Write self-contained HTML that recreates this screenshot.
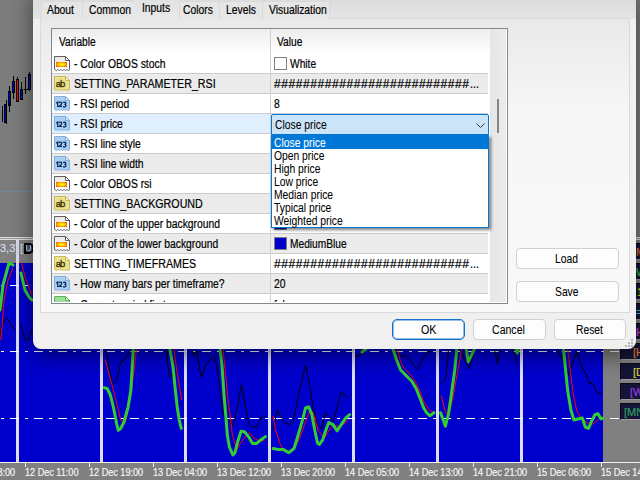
<!DOCTYPE html>
<html><head><meta charset="utf-8">
<style>
*{box-sizing:border-box}
html,body{margin:0;padding:0}
body{width:640px;height:480px;overflow:hidden;position:relative;background:#808080;font-family:"Liberation Sans",sans-serif}
.abs{position:absolute}
.t{position:absolute;line-height:20px;white-space:nowrap;-webkit-text-stroke:0.2px currentColor}
#topchart{position:absolute;left:0;top:0;width:640px;height:237px;background:#7c7c7c}
#sep{position:absolute;left:0;top:237px;width:640px;height:3px;border-top:1px solid #dedede;border-bottom:1px solid #dedede;background:#9a9a9a}
#sub{position:absolute;left:0;top:240px;width:640px;height:222px;background:#808080}
#blue{position:absolute;left:0;top:263px;width:603px;height:199px;background:#0000cd}
.vsep{position:absolute;top:240px;width:3px;height:222px;background:#dcdcf2}
#axis{position:absolute;left:0;top:462px;width:640px;height:18px;background:#808080;border-top:1px solid #f0f0f0}
.tick{position:absolute;top:463px;width:1px;height:4px;background:#f0f0f0}
.rbox{position:absolute;left:620px;width:22px;height:17px;background:#131436;border:1px solid #0a0a18;border-bottom-color:#9a9a9a}
#dlg{position:absolute;left:33px;top:-10px;width:603px;height:359px;background:#f0f0f0;border-radius:0 0 8px 8px;box-shadow:0 6px 22px rgba(0,0,0,.5)}
#tabstrip{position:absolute;left:33px;top:0;width:603px;height:19px;background:linear-gradient(#dcdcdc,#e4e4e4)}
#panel{position:absolute;left:40px;top:18px;width:590px;height:295px;border:1px solid #d9d9d9;background:linear-gradient(#e9e9e9,#f6f6f6 90px,#f9f9f9)}
.tab{position:absolute;top:1px;height:18px;border:1px solid #d9d9d9;border-bottom:none;background:#e6e6e6}
.tab.sel{top:-1px;height:20px;background:linear-gradient(#e2e2e2,#e9e9e9);border-color:transparent}
#list{position:absolute;left:51px;top:28px;width:457px;height:276px;border:1px solid #828790;background:#fff}
#listclip{position:absolute;left:52px;top:29px;width:455px;height:273px;overflow:hidden}
#listin{position:absolute;left:-52px;top:-29px;width:640px;height:480px}
#hdr{position:absolute;left:52px;top:29px;width:438px;height:24px;background:linear-gradient(#ededed,#ffffff)}
.row{position:absolute;left:52px;width:436px;height:20px}
.hl{position:absolute;left:52px;width:436px;height:1px;background:#cbcbcb}
.ic{position:absolute;width:16px;height:16px}
.ic svg{display:block}
.sw{position:absolute;width:13px;height:13px;border:1px solid #808080}
#coldiv{position:absolute;left:270px;top:29px;width:1px;height:275px;background:#d0d0d0}
#sbar{position:absolute;left:490px;top:29px;width:16px;height:273px;background:linear-gradient(90deg,#e6e6e6,#ebebeb)}
#thumb{position:absolute;left:497px;top:99px;width:2px;height:34px;background:#858585}
#combo{position:absolute;left:271px;top:114px;width:218px;height:21px;border-radius:2px 2px 0 0;background:#cce4f7;border:1px solid #0078d4}
#drop{position:absolute;left:271px;top:135px;width:218px;height:93px;background:#fff;border:1px solid #0078d4;border-top:none;box-shadow:2px 2px 3px rgba(0,0,0,.5)}
.btn{position:absolute;height:21px;border:1px solid #d0d0d0;border-radius:4px;background:#fdfdfd}
</style></head><body>
<div id="topchart">
<svg class="abs" style="left:0;top:0" width="40" height="237">

<g stroke="#000" stroke-width="1">
<line x1="2.5" y1="106" x2="2.5" y2="122"/>
<line x1="6.5" y1="100" x2="6.5" y2="124"/>
<line x1="9.5" y1="86" x2="9.5" y2="112"/>
<line x1="13.5" y1="76" x2="13.5" y2="99"/>
<line x1="17.5" y1="77" x2="17.5" y2="102"/>
<line x1="21.5" y1="82" x2="21.5" y2="99"/>
<line x1="25.5" y1="77" x2="25.5" y2="94"/>
<line x1="29.5" y1="72" x2="29.5" y2="91"/>
<line x1="24" y1="89.5" x2="28" y2="89.5"/>
</g>
<g stroke="#000" stroke-width="1">
<rect x="4.5" y="104.5" width="2" height="18" fill="#0000cd"/>
<rect x="8.5" y="91.5" width="2" height="14" fill="#0000cd"/>
<rect x="12.5" y="81.5" width="2" height="11" fill="#0000cd"/>
<rect x="16.5" y="79.5" width="2" height="22" fill="#ff0000"/>
<rect x="20.5" y="89.5" width="2" height="10" fill="#0000cd"/>
<rect x="28.5" y="74.5" width="2" height="15" fill="#0000cd"/>
</g>
</svg>
</div>
<div class="abs" style="left:0;top:191px;width:640px;height:1px;background:#7088a0"></div>
<div id="sep"></div>
<div id="sub"></div>
<div id="blue"></div>
<div class="vsep" style="left:16px"></div>
<div class="vsep" style="left:100px"></div>
<div class="vsep" style="left:184px"></div>
<div class="vsep" style="left:268px"></div>
<div class="vsep" style="left:352px"></div>
<div class="vsep" style="left:436px"></div>
<div class="vsep" style="left:520px"></div>
<svg class="abs" style="left:0;top:0" width="640" height="480">
<g stroke="#ffffff" stroke-width="1" stroke-dasharray="9 6 3 6" fill="none">
<line x1="-14" y1="285.5" x2="640" y2="285.5"/>
<line x1="-14" y1="351.5" x2="640" y2="351.5"/>
<line x1="-14" y1="418.5" x2="640" y2="418.5"/>
</g>
<g fill="none" stroke-linejoin="round" stroke-linecap="round">
<g stroke="#000" stroke-width="1">
<polyline points="0,335 3,322 7,318 10,323 14,330"/>
<polyline points="21,325 25,340 28,340 32,330"/>
<polyline points="106,349 109.4,368 112.5,385.6 115.6,382.5 118.75,372 120.8,361.7 124,360.6 126,357.5 129.2,353 131.25,349"/>
<polyline points="166.7,349 167.7,363.75 169.8,377.3 172.5,373 175,393 177,404.4 180.2,403.3"/>
<polyline points="192.3,350 193.75,355.4 196.25,350.8"/>
<polyline points="197,352.3 201.25,377.3 206.5,363.75 213.75,355.4 216.9,365.8 220,390.8 223.1,413.75 225.4,419 229.4,420 232.9,425.7 237.6,406.8 241.25,384.6 247.1,414.9 249.1,425 253.2,427.1 257.3,426.4 260.65,419 263.4,415.6 265.4,417"/>
<polyline points="273.2,428.75 277.4,410 280.5,416.25 284.7,422.5 288.8,424.6 293,421.5 297.2,401.7 301.3,383 305.5,365.2 309.7,385 313.1,408 317.3,424.6 321.5,428.75 325.6,413 328.75,416.25 332.9,421.5 337,408 341.25,392.3 344.4,394.4 348.5,397.5"/>
<polyline points="356,356 361,355 364,350"/>
<polyline points="393.3,349 401.7,356.5 405.8,355.4 411,361.7 417.3,369 420.4,362.7 425.6,354.4 429.8,350.8 433,349"/>
<polyline points="441.2,383.5 445.4,379.4 447.5,361.7 448.5,349"/>
<polyline points="461,351.25 465.2,361.7 469.3,369 472.5,356.5 474.5,349"/>
<polyline points="494.3,349.2 495.9,355.4 497.5,363.75 498.5,355.4 499.5,349.2"/>
<polyline points="511.5,349.2 514.1,353.3 515.7,358.5 517.25,363.75"/>
<polyline points="557.3,349 562.5,359.6 568.75,375.2 573,361.7 577,352.3 581.25,365.8 584.4,371 587.5,378.3 589.6,383.5 592.7,383.5 595.8,389.8 598,394 601,393"/>
</g>
<g stroke="#ff0000" stroke-width="1">
<polyline points="1,340 4,300 8,280 13,268"/>
<polyline points="21,262 26,280 32,295"/>
<polyline points="105.2,359.6 112.5,386.7 120.8,420 122.9,423 125.4,422 129.2,403 133.3,376 136.5,349"/>
<polyline points="174,349 177,372 180.2,390.8 181.7,399.6"/>
<polyline points="223,349 225.2,370 228.3,403.3 230.2,414.9 232.2,433.9 234.9,443.4 236.9,449.5 240.3,443.4 244.4,438 249.1,432.5 253.9,438 258.6,440.65 264,440.65"/>
<polyline points="273.2,416.25 275.3,428.75 279.5,442.3 282.6,448.5 289.9,451.7 295,447.5 299.25,439.2 304.5,424.6 309.7,411 312.8,412 318.3,430.8 324.6,438 328.75,430.8 333,424.6 339.2,426.7 344.4,423.5 348.5,419.4"/>
<polyline points="397.5,349 400.6,361.7 403.75,368 409,373 415.2,381.5 419.4,389.8 423.5,401.25 428.75,409.6 434,412.7"/>
<polyline points="441.2,396 445.4,411.7 448.5,415.8 452.7,399 456.8,376.25 461,353.3 462,349"/>
<polyline points="567.7,349 569.8,365.8 573,393 577,411.7 581.25,418 587.5,423 592.7,424.2 596.9,421 601,416.9"/>
</g>
<g stroke="#33cc33" stroke-width="3">
<polyline points="0,310 3,285 9,263 13,265"/>
<polyline points="21,273 25,290 29,297 32,300"/>
<polyline points="104.2,387.7 107.3,388.75 110.4,395 113.5,407.5 116.7,424 118.3,430.4 120.8,428.3 124,422 128,407.5 130.8,390.8 132.3,365.8 133.3,349"/>
<polyline points="169.8,349 172.9,365.8 175,386.7 177,405.4 179.2,420 181.25,428.3"/>
<polyline points="220,349 222,365.8 224.2,397 225.8,415.8 227.5,436.6 229.5,447.4 232.9,454.9 234.9,452.8 237.6,442 241,431.2 244.4,431.8 248.5,436.6 252.5,443.4 256.6,443.4 260.65,440 265.4,436.6"/>
<polyline points="273.2,448.5 278.4,449.6 283.6,449.6 288.8,452.7 294,448.5 298.2,435 302.4,420.4 305.5,408 308.6,406.9 311.75,414.2 314.9,430.8 317.6,443.3 319.4,444.4 322.5,440.2 325.6,430.8 328.75,422.5 333,424.6 337,430.8 341.25,424.6 345.4,418.3 349.6,414.6"/>
<polyline points="362,352 366,349"/>
<polyline points="392.9,349 396.5,359.6 400.6,370 405.8,375.2 412,381.5 416.25,388.75 420.4,399.2 423.5,407.5 426.7,412.7 429.8,415.8 434,412.7"/>
<polyline points="440.6,412.7 445.4,426.25 448.5,413.75 451.6,393 454.75,370 456.8,349"/>
<polyline points="466.2,349 468.3,361.7 471.4,355.4 474.5,349"/>
<polyline points="516,349 517.25,353 518.5,349"/>
<polyline points="563.5,349 565.6,370 567.7,390.8 570.8,409.6 574,420 578,419 582.3,418 585.4,427.3 588.5,428.3 591.7,421 594.8,414.8 598,413.75 601,419 603,418"/>
</g>
</g>
</svg>

<span class="t" style="left:0px;top:238px;font-size:11px;color:#d4dae6;">3,3)</span>
<span class="t" style="left:20px;top:238px;font-size:11px;color:#d4dae6;">[</span>
<span class="abs" style="left:24px;top:243px;width:10px;height:11px;background:#4a5568;border:2px solid #000;border-radius:0 5px 5px 0"></span><span class="abs" style="left:26px;top:245px;width:5px;height:6px;border:1px solid #a8c4e8;border-top:none;border-radius:0 0 3px 3px"></span>
<div id="axis"></div>
<div class="tick" style="left:25px"></div><span class="t" style="left:25px;top:463px;font-size:10px;color:#f4f4f4;transform:scaleX(0.91);transform-origin:0 0;">12 Dec 11:00</span>
<div class="tick" style="left:89px"></div><span class="t" style="left:89px;top:463px;font-size:10px;color:#f4f4f4;transform:scaleX(0.91);transform-origin:0 0;">12 Dec 19:00</span>
<div class="tick" style="left:153px"></div><span class="t" style="left:153px;top:463px;font-size:10px;color:#f4f4f4;transform:scaleX(0.91);transform-origin:0 0;">13 Dec 04:00</span>
<div class="tick" style="left:217px"></div><span class="t" style="left:217px;top:463px;font-size:10px;color:#f4f4f4;transform:scaleX(0.91);transform-origin:0 0;">13 Dec 12:00</span>
<div class="tick" style="left:281px"></div><span class="t" style="left:281px;top:463px;font-size:10px;color:#f4f4f4;transform:scaleX(0.91);transform-origin:0 0;">13 Dec 20:00</span>
<div class="tick" style="left:345px"></div><span class="t" style="left:345px;top:463px;font-size:10px;color:#f4f4f4;transform:scaleX(0.91);transform-origin:0 0;">14 Dec 05:00</span>
<div class="tick" style="left:409px"></div><span class="t" style="left:409px;top:463px;font-size:10px;color:#f4f4f4;transform:scaleX(0.91);transform-origin:0 0;">14 Dec 13:00</span>
<div class="tick" style="left:473px"></div><span class="t" style="left:473px;top:463px;font-size:10px;color:#f4f4f4;transform:scaleX(0.91);transform-origin:0 0;">14 Dec 21:00</span>
<div class="tick" style="left:537px"></div><span class="t" style="left:537px;top:463px;font-size:10px;color:#f4f4f4;transform:scaleX(0.91);transform-origin:0 0;">15 Dec 06:00</span>
<div class="tick" style="left:601px"></div><span class="t" style="left:601px;top:463px;font-size:10px;color:#f4f4f4;transform:scaleX(0.91);transform-origin:0 0;">15 Dec 14:00</span>
<span class="t" style="left:-39px;top:463px;font-size:10px;color:#f4f4f4;transform:scaleX(0.91);transform-origin:0 0;">12 Dec 03:00</span>
<div class="rbox" style="top:243px"></div><span class="t" style="left:636px;top:242px;font-size:11px;color:#e07030;">M</span>
<div class="rbox" style="top:263px"></div><span class="t" style="left:636px;top:262px;font-size:11px;color:#30c030;">W</span>
<div class="rbox" style="top:283px"></div><span class="t" style="left:637px;top:282px;font-size:11px;color:#e0e000;">1</span>
<div class="rbox" style="top:303px"></div><span class="t" style="left:636px;top:302px;font-size:11px;color:#30c0e0;">=</span>
<div class="rbox" style="top:323px"></div><span class="t" style="left:636px;top:322px;font-size:11px;color:#e040e0;">H</span>
<div class="rbox" style="top:343px"></div><span class="t" style="left:633px;top:342px;font-size:11px;color:#e08030;">[H</span>
<div class="rbox" style="top:363px"></div><span class="t" style="left:633px;top:362px;font-size:11px;color:#d0d040;">[D</span>
<div class="rbox" style="top:383px"></div><span class="t" style="left:630px;top:382px;font-size:11px;color:#9040e0;">[W</span>
<div class="rbox" style="top:403px"></div><span class="t" style="left:624px;top:402px;font-size:11px;color:#30a060;">[MN</span>

<div id="dlg"></div>
<div id="tabstrip"></div>
<div id="panel"></div>
<div class="tab" style="left:41px;width:42px"></div><span class="t" style="left:47px;top:0px;font-size:12px;color:#000;transform:scaleX(0.86);transform-origin:0 0;">About</span>
<div class="tab" style="left:82px;width:53px"></div><span class="t" style="left:89px;top:0px;font-size:12px;color:#000;transform:scaleX(0.86);transform-origin:0 0;">Common</span>
<div class="tab sel" style="left:134px;width:46px"></div><span class="t" style="left:142px;top:-2px;font-size:12px;color:#000;transform:scaleX(0.86);transform-origin:0 0;">Inputs</span>
<div class="tab" style="left:179px;width:41px"></div><span class="t" style="left:183px;top:0px;font-size:12px;color:#000;transform:scaleX(0.86);transform-origin:0 0;">Colors</span>
<div class="tab" style="left:219px;width:44px"></div><span class="t" style="left:226px;top:0px;font-size:12px;color:#000;transform:scaleX(0.86);transform-origin:0 0;">Levels</span>
<div class="tab" style="left:262px;width:68px"></div><span class="t" style="left:269px;top:0px;font-size:12px;color:#000;transform:scaleX(0.86);transform-origin:0 0;">Visualization</span>
<div id="list"></div>
<div id="listclip"><div id="listin">
<div id="hdr"></div>
<span class="t" style="left:59px;top:32px;font-size:12px;color:#000;transform:scaleX(0.85);transform-origin:0 0;">Variable</span><span class="t" style="left:277px;top:32px;font-size:12px;color:#000;transform:scaleX(0.85);transform-origin:0 0;">Value</span>
<div class=.abs" style="left:488px;top:30px;width:1px;height:23px;background:#d0d0d0"></div>
<div class="row" style="top:53px;background:#ffffff"></div>
<div class="ic" style="left:54px;top:56px"><svg width="16" height="16" viewBox="0 0 16 16"><defs><radialGradient id="cg" cx=".5" cy=".5" r=".6"><stop offset="0" stop-color="#ffff00"/><stop offset=".45" stop-color="#ffd000"/><stop offset="1" stop-color="#ff5a00"/></radialGradient></defs><path d="M0.5 0.5H11.5L15.5 4.5V13.5L14.5 15L13 13.3L11.5 14.8L10 13.3L8.5 14.8L7 13.3L5.5 14.8L4 13.3L2.5 14.8L0.5 13.3Z" fill="#fcfcfc" stroke="#5e5e5e"/><rect x="1" y="1" width="10" height="5" fill="#ececec"/><path d="M11.5 0.5V4.5H15.5Z" fill="#f4f4f4" stroke="#5e5e5e"/><rect x="2" y="6" width="11" height="5" fill="url(#cg)"/></svg></div>
<span class="t" style="left:74px;top:54px;font-size:12px;color:#000;transform:scaleX(0.862);transform-origin:0 0;">- Color OBOS stoch</span>
<div class="sw" style="left:274px;top:57px;background:#ffffff"></div>
<span class="t" style="left:290px;top:54px;font-size:12px;color:#000;transform:scaleX(0.85);transform-origin:0 0;">White</span>
<div class="row" style="top:73px;background:#ebebeb"></div><div class="hl" style="top:73px"></div>
<div class="ic" style="left:54px;top:76px"><svg width="16" height="16" viewBox="0 0 16 16"><path d="M0.5 0.5H11.5L15.5 4.5V13.5L14.5 15L13 13.3L11.5 14.8L10 13.3L8.5 14.8L7 13.3L5.5 14.8L4 13.3L2.5 14.8L0.5 13.3Z" fill="#ece28e" stroke="#c9b65a"/><path d="M11.5 0.5V4.5H15.5Z" fill="#fff6c4" stroke="#c9b65a"/><text x="1.8" y="11.3" font-size="9.5" font-family="Liberation Sans" fill="#3c3400" stroke="#3c3400" stroke-width="0.35" textLength="9.5">ab</text></svg></div>
<span class="t" style="left:74px;top:74px;font-size:12px;color:#000;transform:scaleX(0.89);transform-origin:0 0;">SETTING_PARAMETER_RSI</span>
<span class="t" style="left:274px;top:74px;font-size:12px;color:#000;letter-spacing:0.57px;">###########################</span><span class="t" style="left:470px;top:74px;font-size:12px;color:#000;transform:scaleX(0.9);transform-origin:0 0;">...</span>
<div class="row" style="top:93px;background:#ffffff"></div><div class="hl" style="top:93px"></div>
<div class="ic" style="left:54px;top:96px"><svg width="16" height="16" viewBox="0 0 16 16"><path d="M0.5 0.5H11.5L15.5 4.5V13.5L14.5 15L13 13.3L11.5 14.8L10 13.3L8.5 14.8L7 13.3L5.5 14.8L4 13.3L2.5 14.8L0.5 13.3Z" fill="#aacff2" stroke="#7eaedc"/><path d="M11.5 0.5V4.5H15.5Z" fill="#d8eafc" stroke="#7eaedc"/><path d="M2.2 7.2L3.7 6.1V11M5 7Q5.4 6.1 6.5 6.1Q7.9 6.1 7.9 7.3Q7.9 8.3 5.1 10.4H8.1M9.1 6.4Q9.6 6.1 10.4 6.1Q11.9 6.1 11.9 7.3Q11.9 8.3 10.4 8.4Q12 8.5 12 9.6Q12 11 10.4 11Q9.6 11 9 10.6" fill="none" stroke="#0c2a52" stroke-width="1.25"/></svg></div>
<span class="t" style="left:74px;top:94px;font-size:12px;color:#000;transform:scaleX(0.862);transform-origin:0 0;">- RSI period</span>
<span class="t" style="left:274px;top:94px;font-size:12px;color:#000;transform:scaleX(0.86);transform-origin:0 0;">8</span>
<div class="row" style="top:113px;background:#dfeffd"></div><div class="hl" style="top:113px"></div>
<div class="ic" style="left:54px;top:116px"><svg width="16" height="16" viewBox="0 0 16 16"><path d="M0.5 0.5H11.5L15.5 4.5V13.5L14.5 15L13 13.3L11.5 14.8L10 13.3L8.5 14.8L7 13.3L5.5 14.8L4 13.3L2.5 14.8L0.5 13.3Z" fill="#aacff2" stroke="#7eaedc"/><path d="M11.5 0.5V4.5H15.5Z" fill="#d8eafc" stroke="#7eaedc"/><path d="M2.2 7.2L3.7 6.1V11M5 7Q5.4 6.1 6.5 6.1Q7.9 6.1 7.9 7.3Q7.9 8.3 5.1 10.4H8.1M9.1 6.4Q9.6 6.1 10.4 6.1Q11.9 6.1 11.9 7.3Q11.9 8.3 10.4 8.4Q12 8.5 12 9.6Q12 11 10.4 11Q9.6 11 9 10.6" fill="none" stroke="#0c2a52" stroke-width="1.25"/></svg></div>
<span class="t" style="left:74px;top:114px;font-size:12px;color:#000;transform:scaleX(0.862);transform-origin:0 0;">- RSI price</span>
<div class="row" style="top:133px;background:#ffffff"></div><div class="hl" style="top:133px"></div>
<div class="ic" style="left:54px;top:136px"><svg width="16" height="16" viewBox="0 0 16 16"><path d="M0.5 0.5H11.5L15.5 4.5V13.5L14.5 15L13 13.3L11.5 14.8L10 13.3L8.5 14.8L7 13.3L5.5 14.8L4 13.3L2.5 14.8L0.5 13.3Z" fill="#aacff2" stroke="#7eaedc"/><path d="M11.5 0.5V4.5H15.5Z" fill="#d8eafc" stroke="#7eaedc"/><path d="M2.2 7.2L3.7 6.1V11M5 7Q5.4 6.1 6.5 6.1Q7.9 6.1 7.9 7.3Q7.9 8.3 5.1 10.4H8.1M9.1 6.4Q9.6 6.1 10.4 6.1Q11.9 6.1 11.9 7.3Q11.9 8.3 10.4 8.4Q12 8.5 12 9.6Q12 11 10.4 11Q9.6 11 9 10.6" fill="none" stroke="#0c2a52" stroke-width="1.25"/></svg></div>
<span class="t" style="left:74px;top:134px;font-size:12px;color:#000;transform:scaleX(0.862);transform-origin:0 0;">- RSI line style</span>
<div class="row" style="top:153px;background:#ebebeb"></div><div class="hl" style="top:153px"></div>
<div class="ic" style="left:54px;top:156px"><svg width="16" height="16" viewBox="0 0 16 16"><path d="M0.5 0.5H11.5L15.5 4.5V13.5L14.5 15L13 13.3L11.5 14.8L10 13.3L8.5 14.8L7 13.3L5.5 14.8L4 13.3L2.5 14.8L0.5 13.3Z" fill="#aacff2" stroke="#7eaedc"/><path d="M11.5 0.5V4.5H15.5Z" fill="#d8eafc" stroke="#7eaedc"/><path d="M2.2 7.2L3.7 6.1V11M5 7Q5.4 6.1 6.5 6.1Q7.9 6.1 7.9 7.3Q7.9 8.3 5.1 10.4H8.1M9.1 6.4Q9.6 6.1 10.4 6.1Q11.9 6.1 11.9 7.3Q11.9 8.3 10.4 8.4Q12 8.5 12 9.6Q12 11 10.4 11Q9.6 11 9 10.6" fill="none" stroke="#0c2a52" stroke-width="1.25"/></svg></div>
<span class="t" style="left:74px;top:154px;font-size:12px;color:#000;transform:scaleX(0.862);transform-origin:0 0;">- RSI line width</span>
<div class="row" style="top:173px;background:#ffffff"></div><div class="hl" style="top:173px"></div>
<div class="ic" style="left:54px;top:176px"><svg width="16" height="16" viewBox="0 0 16 16"><defs><radialGradient id="cg" cx=".5" cy=".5" r=".6"><stop offset="0" stop-color="#ffff00"/><stop offset=".45" stop-color="#ffd000"/><stop offset="1" stop-color="#ff5a00"/></radialGradient></defs><path d="M0.5 0.5H11.5L15.5 4.5V13.5L14.5 15L13 13.3L11.5 14.8L10 13.3L8.5 14.8L7 13.3L5.5 14.8L4 13.3L2.5 14.8L0.5 13.3Z" fill="#fcfcfc" stroke="#5e5e5e"/><rect x="1" y="1" width="10" height="5" fill="#ececec"/><path d="M11.5 0.5V4.5H15.5Z" fill="#f4f4f4" stroke="#5e5e5e"/><rect x="2" y="6" width="11" height="5" fill="url(#cg)"/></svg></div>
<span class="t" style="left:74px;top:174px;font-size:12px;color:#000;transform:scaleX(0.862);transform-origin:0 0;">- Color OBOS rsi</span>
<div class="row" style="top:193px;background:#ebebeb"></div><div class="hl" style="top:193px"></div>
<div class="ic" style="left:54px;top:196px"><svg width="16" height="16" viewBox="0 0 16 16"><path d="M0.5 0.5H11.5L15.5 4.5V13.5L14.5 15L13 13.3L11.5 14.8L10 13.3L8.5 14.8L7 13.3L5.5 14.8L4 13.3L2.5 14.8L0.5 13.3Z" fill="#ece28e" stroke="#c9b65a"/><path d="M11.5 0.5V4.5H15.5Z" fill="#fff6c4" stroke="#c9b65a"/><text x="1.8" y="11.3" font-size="9.5" font-family="Liberation Sans" fill="#3c3400" stroke="#3c3400" stroke-width="0.35" textLength="9.5">ab</text></svg></div>
<span class="t" style="left:74px;top:194px;font-size:12px;color:#000;transform:scaleX(0.89);transform-origin:0 0;">SETTING_BACKGROUND</span>
<span class="t" style="left:274px;top:194px;font-size:12px;color:#000;letter-spacing:0.57px;">###########################</span><span class="t" style="left:470px;top:194px;font-size:12px;color:#000;transform:scaleX(0.9);transform-origin:0 0;">...</span>
<div class="row" style="top:213px;background:#ffffff"></div><div class="hl" style="top:213px"></div>
<div class="ic" style="left:54px;top:216px"><svg width="16" height="16" viewBox="0 0 16 16"><defs><radialGradient id="cg" cx=".5" cy=".5" r=".6"><stop offset="0" stop-color="#ffff00"/><stop offset=".45" stop-color="#ffd000"/><stop offset="1" stop-color="#ff5a00"/></radialGradient></defs><path d="M0.5 0.5H11.5L15.5 4.5V13.5L14.5 15L13 13.3L11.5 14.8L10 13.3L8.5 14.8L7 13.3L5.5 14.8L4 13.3L2.5 14.8L0.5 13.3Z" fill="#fcfcfc" stroke="#5e5e5e"/><rect x="1" y="1" width="10" height="5" fill="#ececec"/><path d="M11.5 0.5V4.5H15.5Z" fill="#f4f4f4" stroke="#5e5e5e"/><rect x="2" y="6" width="11" height="5" fill="url(#cg)"/></svg></div>
<span class="t" style="left:74px;top:214px;font-size:12px;color:#000;transform:scaleX(0.862);transform-origin:0 0;">- Color of the upper background</span>
<div class="sw" style="left:274px;top:217px;background:#0000cd"></div>
<div class="row" style="top:233px;background:#ebebeb"></div><div class="hl" style="top:233px"></div>
<div class="ic" style="left:54px;top:236px"><svg width="16" height="16" viewBox="0 0 16 16"><defs><radialGradient id="cg" cx=".5" cy=".5" r=".6"><stop offset="0" stop-color="#ffff00"/><stop offset=".45" stop-color="#ffd000"/><stop offset="1" stop-color="#ff5a00"/></radialGradient></defs><path d="M0.5 0.5H11.5L15.5 4.5V13.5L14.5 15L13 13.3L11.5 14.8L10 13.3L8.5 14.8L7 13.3L5.5 14.8L4 13.3L2.5 14.8L0.5 13.3Z" fill="#fcfcfc" stroke="#5e5e5e"/><rect x="1" y="1" width="10" height="5" fill="#ececec"/><path d="M11.5 0.5V4.5H15.5Z" fill="#f4f4f4" stroke="#5e5e5e"/><rect x="2" y="6" width="11" height="5" fill="url(#cg)"/></svg></div>
<span class="t" style="left:74px;top:234px;font-size:12px;color:#000;transform:scaleX(0.862);transform-origin:0 0;">- Color of the lower background</span>
<div class="sw" style="left:274px;top:237px;background:#0000cd"></div>
<span class="t" style="left:290px;top:234px;font-size:12px;color:#000;transform:scaleX(0.85);transform-origin:0 0;">MediumBlue</span>
<div class="row" style="top:253px;background:#ffffff"></div><div class="hl" style="top:253px"></div>
<div class="ic" style="left:54px;top:256px"><svg width="16" height="16" viewBox="0 0 16 16"><path d="M0.5 0.5H11.5L15.5 4.5V13.5L14.5 15L13 13.3L11.5 14.8L10 13.3L8.5 14.8L7 13.3L5.5 14.8L4 13.3L2.5 14.8L0.5 13.3Z" fill="#ece28e" stroke="#c9b65a"/><path d="M11.5 0.5V4.5H15.5Z" fill="#fff6c4" stroke="#c9b65a"/><text x="1.8" y="11.3" font-size="9.5" font-family="Liberation Sans" fill="#3c3400" stroke="#3c3400" stroke-width="0.35" textLength="9.5">ab</text></svg></div>
<span class="t" style="left:74px;top:254px;font-size:12px;color:#000;transform:scaleX(0.89);transform-origin:0 0;">SETTING_TIMEFRAMES</span>
<span class="t" style="left:274px;top:254px;font-size:12px;color:#000;letter-spacing:0.57px;">###########################</span><span class="t" style="left:470px;top:254px;font-size:12px;color:#000;transform:scaleX(0.9);transform-origin:0 0;">...</span>
<div class="row" style="top:273px;background:#ebebeb"></div><div class="hl" style="top:273px"></div>
<div class="ic" style="left:54px;top:276px"><svg width="16" height="16" viewBox="0 0 16 16"><path d="M0.5 0.5H11.5L15.5 4.5V13.5L14.5 15L13 13.3L11.5 14.8L10 13.3L8.5 14.8L7 13.3L5.5 14.8L4 13.3L2.5 14.8L0.5 13.3Z" fill="#aacff2" stroke="#7eaedc"/><path d="M11.5 0.5V4.5H15.5Z" fill="#d8eafc" stroke="#7eaedc"/><path d="M2.2 7.2L3.7 6.1V11M5 7Q5.4 6.1 6.5 6.1Q7.9 6.1 7.9 7.3Q7.9 8.3 5.1 10.4H8.1M9.1 6.4Q9.6 6.1 10.4 6.1Q11.9 6.1 11.9 7.3Q11.9 8.3 10.4 8.4Q12 8.5 12 9.6Q12 11 10.4 11Q9.6 11 9 10.6" fill="none" stroke="#0c2a52" stroke-width="1.25"/></svg></div>
<span class="t" style="left:74px;top:274px;font-size:12px;color:#000;transform:scaleX(0.862);transform-origin:0 0;">- How many bars per timeframe?</span>
<span class="t" style="left:274px;top:274px;font-size:12px;color:#000;transform:scaleX(0.86);transform-origin:0 0;">20</span>
<div class="row" style="top:293px;background:#ffffff"></div><div class="hl" style="top:293px"></div>
<div class="ic" style="left:54px;top:296px"><svg width="16" height="16" viewBox="0 0 16 16"><path d="M0.5 0.5H11.5L15.5 4.5V13.5L14.5 15L13 13.3L11.5 14.8L10 13.3L8.5 14.8L7 13.3L5.5 14.8L4 13.3L2.5 14.8L0.5 13.3Z" fill="#9ddf98" stroke="#62b05c"/><path d="M11.5 0.5V4.5H15.5Z" fill="#d4f7d0" stroke="#62b05c"/></svg></div>
<span class="t" style="left:74px;top:295px;font-size:12px;color:#000;transform:scaleX(0.862);transform-origin:0 0;">- Current period first</span>
<span class="t" style="left:274px;top:295px;font-size:12px;color:#000;transform:scaleX(0.86);transform-origin:0 0;">false</span>
<div id="coldiv"></div>
<div id="sbar"></div>
<div id="thumb"></div>
</div></div>
<div id="combo"></div><span class="t" style="left:275px;top:115px;font-size:12px;color:#000;transform:scaleX(0.86);transform-origin:0 0;-webkit-text-stroke:0.05px currentColor;">Close price</span>
<svg class="abs" style="left:476px;top:123px" width="9" height="5"><polyline points="0.5,0.5 4.5,4.5 8.5,0.5" fill="none" stroke="#333" stroke-width="1"/></svg>
<div id="drop"></div>
<div class="abs" style="left:271px;top:135px;width:218px;height:14px;background:#0078d7"></div>
<span class="t" style="left:274px;top:133px;font-size:12px;color:#fff;transform:scaleX(0.86);transform-origin:0 0;-webkit-text-stroke:0.05px currentColor;">Close price</span>
<span class="t" style="left:274px;top:146px;font-size:12px;color:#000;transform:scaleX(0.86);transform-origin:0 0;-webkit-text-stroke:0.05px currentColor;">Open price</span>
<span class="t" style="left:274px;top:159px;font-size:12px;color:#000;transform:scaleX(0.86);transform-origin:0 0;-webkit-text-stroke:0.05px currentColor;">High price</span>
<span class="t" style="left:274px;top:172px;font-size:12px;color:#000;transform:scaleX(0.86);transform-origin:0 0;-webkit-text-stroke:0.05px currentColor;">Low price</span>
<span class="t" style="left:274px;top:185px;font-size:12px;color:#000;transform:scaleX(0.86);transform-origin:0 0;-webkit-text-stroke:0.05px currentColor;">Median price</span>
<span class="t" style="left:274px;top:198px;font-size:12px;color:#000;transform:scaleX(0.86);transform-origin:0 0;-webkit-text-stroke:0.05px currentColor;">Typical price</span>
<span class="t" style="left:274px;top:211px;font-size:12px;color:#000;transform:scaleX(0.86);transform-origin:0 0;-webkit-text-stroke:0.05px currentColor;">Weighted price</span>

<div class="btn" style="left:516px;top:248px;width:103px"></div><span class="t" style="left:555px;top:249px;font-size:12px;color:#000;transform:scaleX(0.86);transform-origin:0 0;-webkit-text-stroke:0.08px currentColor;">Load</span>
<div class="btn" style="left:516px;top:281px;width:103px"></div><span class="t" style="left:555px;top:282px;font-size:12px;color:#000;transform:scaleX(0.86);transform-origin:0 0;-webkit-text-stroke:0.08px currentColor;">Save</span>
<div class="btn" style="left:392px;top:319px;width:73px;border:1px solid #1470c8;box-shadow:inset 0 0 0 1px rgba(20,112,200,.45);border-radius:5px"></div><span class="t" style="left:421px;top:320px;font-size:12px;color:#000;transform:scaleX(0.89);transform-origin:0 0;-webkit-text-stroke:0.08px currentColor;">OK</span>
<div class="btn" style="left:473px;top:319px;width:73px"></div><span class="t" style="left:492px;top:320px;font-size:12px;color:#000;transform:scaleX(0.88);transform-origin:0 0;-webkit-text-stroke:0.08px currentColor;">Cancel</span>
<div class="btn" style="left:554px;top:319px;width:72px"></div><span class="t" style="left:576px;top:320px;font-size:12px;color:#000;transform:scaleX(0.86);transform-origin:0 0;-webkit-text-stroke:0.08px currentColor;">Reset</span>
<div class="abs" style="left:631px;top:339px;width:2px;height:2px;background:#b4b4b4"></div><div class="abs" style="left:628px;top:342px;width:2px;height:2px;background:#b4b4b4"></div><div class="abs" style="left:631px;top:342px;width:2px;height:2px;background:#b4b4b4"></div><div class="abs" style="left:625px;top:345px;width:2px;height:2px;background:#b4b4b4"></div><div class="abs" style="left:628px;top:345px;width:2px;height:2px;background:#b4b4b4"></div><div class="abs" style="left:631px;top:345px;width:2px;height:2px;background:#b4b4b4"></div>
</body></html>
